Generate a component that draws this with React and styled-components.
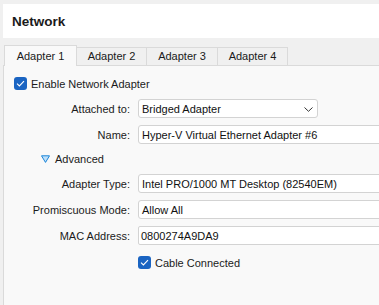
import React from "react";
import styled, { createGlobalStyle } from "styled-components";

const GlobalStyle = createGlobalStyle`
  body {
    margin: 0;
    background: #f0f0f0;
    font-family: "Liberation Sans", Arial, sans-serif;
    font-size: 11px;
    color: #1b1b1b;
    overflow: hidden;
  }
`;

const Page = styled.div`
  padding: 4px 0 0 3px;
  width: 376px;
  height: 301px;
  overflow: hidden;
`;

const Header = styled.div`
  height: 34px;
  background: #ffffff;
  display: flex;
  align-items: center;
  padding-left: 9px;
`;

const Title = styled.h1`
  margin: 0;
  font-size: 13.5px;
  font-weight: bold;
  color: #1a1a1a;
`;

const TabBar = styled.div`
  display: flex;
  align-items: flex-start;
  height: 21px;
  margin-top: 7px;
  margin-bottom: -1px;
  padding-left: 1px;
  position: relative;
  z-index: 1;
`;

const Tab = styled.div`
  box-sizing: border-box;
  width: ${(p) => p.$width}px;
  height: ${(p) => (p.$active ? 21 : 18)}px;
  margin-top: ${(p) => (p.$active ? 0 : 2)}px;
  margin-left: -1px;
  border: 1px solid #dadada;
  border-bottom: none;
  background: ${(p) => (p.$active ? "#f9f9f9" : "#f0f0f0")};
  padding-top: ${(p) => (p.$active ? 4 : 2)}px;
  line-height: 13px;
  text-align: center;
  color: #1a1a1a;
  &:first-child {
    margin-left: 0;
  }
`;

const Panel = styled.div`
  background: #f9f9f9;
  border-top: 1px solid #dadada;
  border-left: 1px solid #dadada;
  height: 260px;
  padding-top: 11px;
  overflow: hidden;
`;

const CheckRow = styled.label`
  display: flex;
  align-items: center;
  gap: 4px;
  margin-left: ${(p) => p.$indent || 0}px;
  height: 13px;
`;

const Box = styled.span`
  box-sizing: border-box;
  width: 13px;
  height: 13px;
  border-radius: 3px;
  background: #1a64c2;
  display: flex;
  align-items: center;
  justify-content: center;
`;

const Form = styled.div`
  display: grid;
  grid-template-columns: 126px 260px;
  column-gap: 8px;
  row-gap: 7px;
  margin-top: 9px;
`;

const Label = styled.span`
  text-align: right;
  align-self: center;
`;

const Field = styled.div`
  box-sizing: border-box;
  height: 19px;
  width: ${(p) => (p.$width ? `${p.$width}px` : "100%")};
  background: #ffffff;
  border: 1px solid #d3d3d3;
  border-radius: ${(p) => (p.$combo ? 3 : 2)}px;
  display: flex;
  align-items: center;
  justify-content: space-between;
  padding: 1px 0 0 ${(p) => (p.$combo ? 3 : 2)}px;
  color: #111;
`;

const Chevron = styled.svg`
  margin-right: 4px;
`;

const AdvancedRow = styled.div`
  grid-column: 1 / -1;
  display: flex;
  align-items: center;
  gap: 5px;
  height: 16px;
  padding-left: 37px;
`;

const CableRow = styled.div`
  grid-column: 2;
  margin-top: 4px;
`;

const Check = () => (
  <Box>
    <svg width="9" height="7" viewBox="0 0 9 7">
      <path d="M1 3.6 L3.4 6 L8 1.2" fill="none" stroke="#ffffff" strokeWidth="1.1" />
    </svg>
  </Box>
);

const tabs = [
  { name: "Adapter 1", width: 73 },
  { name: "Adapter 2", width: 71 },
  { name: "Adapter 3", width: 72 },
  { name: "Adapter 4", width: 71 },
];

export default function App() {
  return (
    <Page>
      <GlobalStyle />
      <Header>
        <Title>Network</Title>
      </Header>
      <TabBar>
        {tabs.map((t, i) => (
          <Tab key={t.name} $width={t.width} $active={i === 0}>
            {t.name}
          </Tab>
        ))}
      </TabBar>
      <Panel>
        <CheckRow $indent={10}>
          <Check />
          Enable Network Adapter
        </CheckRow>
        <Form>
          <Label>Attached to:</Label>
          <Field $combo $width={180}>
            Bridged Adapter
            <Chevron width="9" height="5" viewBox="0 0 9 5">
              <path d="M0.5 0.5 L4.5 4.3 L8.5 0.5" fill="none" stroke="#333" strokeWidth="1" />
            </Chevron>
          </Field>

          <Label>Name:</Label>
          <Field $combo>Hyper-V Virtual Ethernet Adapter #6</Field>

          <AdvancedRow>
            <svg width="9" height="8" viewBox="0 0 9 8">
              <polygon points="0.5,0.8 8.5,0.8 4.5,7.4" fill="#bfe0fa" stroke="#1c86d9" strokeWidth="1" />
            </svg>
            Advanced
          </AdvancedRow>

          <Label>Adapter Type:</Label>
          <Field $combo>Intel PRO/1000 MT Desktop (82540EM)</Field>

          <Label>Promiscuous Mode:</Label>
          <Field $combo>Allow All</Field>

          <Label>MAC Address:</Label>
          <Field>0800274A9DA9</Field>

          <CableRow>
            <CheckRow>
              <Check />
              Cable Connected
            </CheckRow>
          </CableRow>
        </Form>
      </Panel>
    </Page>
  );
}
